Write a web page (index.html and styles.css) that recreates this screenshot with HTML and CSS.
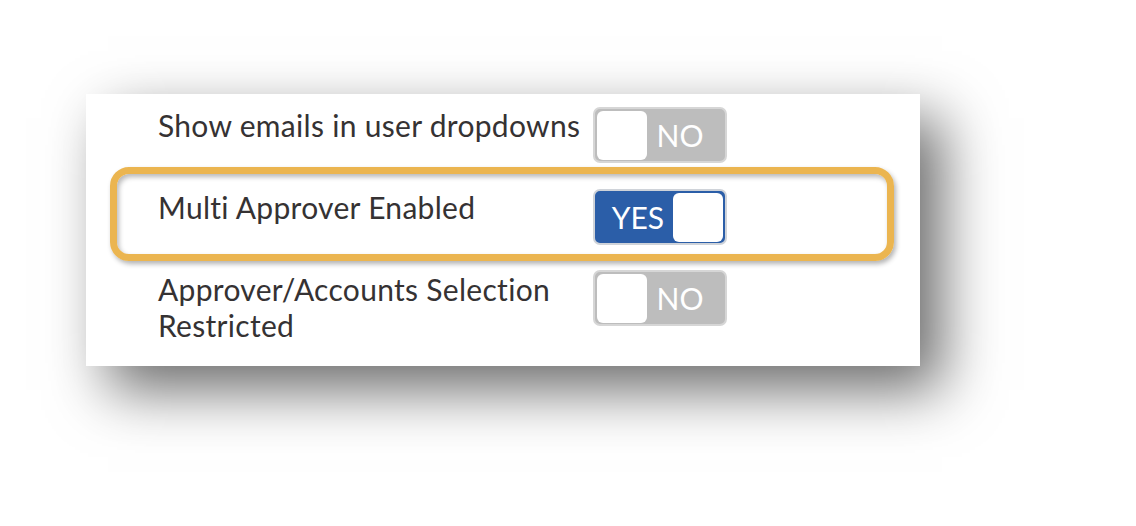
FILE: index.html
```html
<!DOCTYPE html>
<html>
<head>
<meta charset="utf-8">
<link rel="stylesheet" href="styles.css">
</head>
<body>
<div class="page">
  <div class="panel">
    <div class="row row-first">
      <div class="label">Show emails in user dropdowns</div>
      <div class="toggle off"><span class="knob"></span><span class="state">NO</span></div>
    </div>
    <div class="highlight">
      <div class="row row-hl">
        <div class="label">Multi Approver Enabled</div>
        <div class="toggle on"><span class="state">YES</span><span class="knob"></span></div>
      </div>
    </div>
    <div class="row row-last">
      <div class="label">Approver/Accounts Selection<br>Restricted</div>
      <div class="toggle off"><span class="knob"></span><span class="state">NO</span></div>
    </div>
  </div>
</div>
</body>
</html>
```
FILE: styles.css
```css
html, body {
  margin: 0;
  padding: 0;
  background: #ffffff;
}
body {
  width: 1136px;
  height: 526px;
  overflow: hidden;
  font-family: Lato, "Open Sans", sans-serif;
  font-variant-ligatures: none;
  color: #353233;
}
.page {
  padding: 94px 0 0 86px;
}
.panel {
  width: 834px;
  height: 272px;
  box-sizing: border-box;
  background: #ffffff;
  box-shadow: 22px 24px 55px rgba(0, 0, 0, 0.58);
  padding-top: 13px;
  display: flex;
  flex-direction: column;
}
.row {
  display: flex;
  align-items: flex-start;
}
.label {
  width: 435px;
  font-size: 30px;
  line-height: 36px;
  letter-spacing: 0.3px;
  white-space: nowrap;
}
.row-first {
  padding-left: 72px;
}
.highlight {
  margin: 4px 26px 0 24px;
  border: 7px solid #ebb550;
  border-radius: 19px;
  padding: 15px 0 9px 41px;
  box-shadow: 2px 3px 5px rgba(0, 0, 0, 0.3), inset 2px 3px 5px rgba(0, 0, 0, 0.28);
}
.row-last {
  padding-left: 72px;
  margin-top: 9px;
}
.row-last .label {
  padding-top: 1px;
}
.toggle {
  width: 134px;
  height: 56px;
  box-sizing: border-box;
  border: 2px solid #d6d6d6;
  border-radius: 7px;
  display: flex;
  align-items: center;
  padding: 2px;
}
.toggle.off {
  background: #bdbdbd;
}
.toggle.on {
  background: #2b5ea8;
  border-color: #cfd3d9;
}
.knob {
  width: 50px;
  height: 49px;
  background: #ffffff;
  border-radius: 6px;
  flex: none;
}
.state {
  flex: 1;
  text-align: center;
  color: #ffffff;
  font-size: 30px;
  line-height: 1;
}
.toggle.off .state {
  padding-right: 10px;
}
.toggle.on .state {
  padding-left: 6px;
}
```
